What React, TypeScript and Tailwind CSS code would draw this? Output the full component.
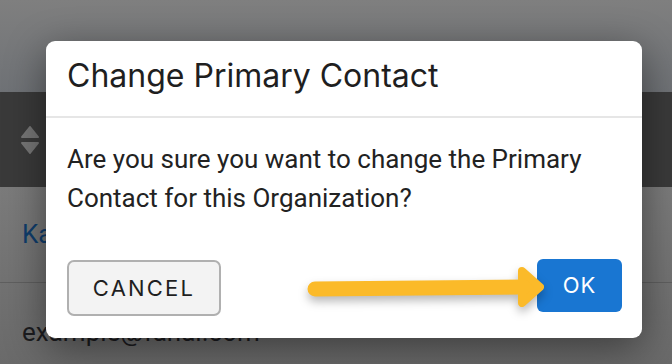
import React from "react";

function SortIcon() {
  return (
    <svg width="20" height="28" viewBox="0 0 20 28" className="shrink-0">
      <path d="M10 1 L18 11 L2 11 Z" fill="#767676" stroke="#767676" strokeWidth="2" strokeLinejoin="round" />
      <path d="M10 27 L18 17 L2 17 Z" fill="#767676" stroke="#767676" strokeWidth="2" strokeLinejoin="round" />
    </svg>
  );
}

function Arrow() {
  return (
    <svg
      width="260"
      height="60"
      viewBox="0 0 260 60"
      className="absolute left-[252px] top-[214px] pointer-events-none"
      style={{ filter: "drop-shadow(0 5px 5px rgba(0,0,0,0.28))" }}
    >
      <line x1="17" y1="34" x2="230" y2="32" stroke="#fbba29" strokeWidth="15" strokeLinecap="round" />
      <path
        d="M224 16 L242 32 L224 48 Z"
        fill="#fbba29"
        stroke="#fbba29"
        strokeWidth="8"
        strokeLinejoin="round"
      />
    </svg>
  );
}

export default function App() {
  return (
    <div className="relative w-[672px] h-[364px] overflow-hidden" style={{ fontFamily: "Roboto, sans-serif" }}>
      {/* page behind the overlay, already dimmed */}
      <div className="flex flex-col h-full">
        <div className="h-[92px] bg-gradient-to-b from-[#7f7f7f] to-[#6f7276]" />
        <div className="h-[95px] bg-[#3a3a3a] flex items-center px-[20px]">
          <SortIcon />
        </div>
        <div className="flex-1 flex flex-col bg-gradient-to-b from-[#7b7b7b] to-[#6a6a6a]">
          <div className="h-[96px] flex items-center px-[22px] border-b border-[#5f5f5f]">
            <span className="text-[26px] text-[#0f3d6c]">Kamila Ford</span>
          </div>
          <div className="flex items-start px-[22px] pt-[30px]">
            <span className="text-[26px] text-[#1c1c1f]">example@fanai.com</span>
          </div>
        </div>
      </div>

      {/* dialog */}
      <div className="absolute left-[46px] top-[41px] w-[596px] h-[297px] bg-white rounded-[9px] shadow-[0_10px_40px_rgba(0,0,0,0.45)] flex flex-col">
        <div
          className="h-[77px] px-[21px] pt-[15px] border-b-2 border-[#e6e6e6] text-[32px] leading-[40px] text-[#1f1f1f]"
          style={{ fontFamily: "Inter, sans-serif" }}
        >
          Change Primary Contact
        </div>
        <div className="px-[21px] pt-[22px] text-[26px] leading-[39px] text-[#222]">
          Are you sure you want to change the Primary Contact for this Organization?
        </div>
        <div className="flex items-start justify-between pl-[21px] pr-[20px] pt-[42px]">
          <button
            className="w-[154px] h-[56px] rounded-[7px] border-2 border-[#b0b0b0] bg-[#f3f3f3] text-[22px] tracking-[0.1em] text-[#1f1f1f]"
            style={{ fontFamily: "Inter, sans-serif" }}
          >
            CANCEL
          </button>
          <button
            className="w-[85px] h-[53px] -mt-[1px] rounded-[6px] bg-[#1976d2] text-[22px] tracking-[0.04em] text-white"
            style={{ fontFamily: "Inter, sans-serif" }}
          >
            OK
          </button>
        </div>
        <Arrow />
      </div>
    </div>
  );
}
